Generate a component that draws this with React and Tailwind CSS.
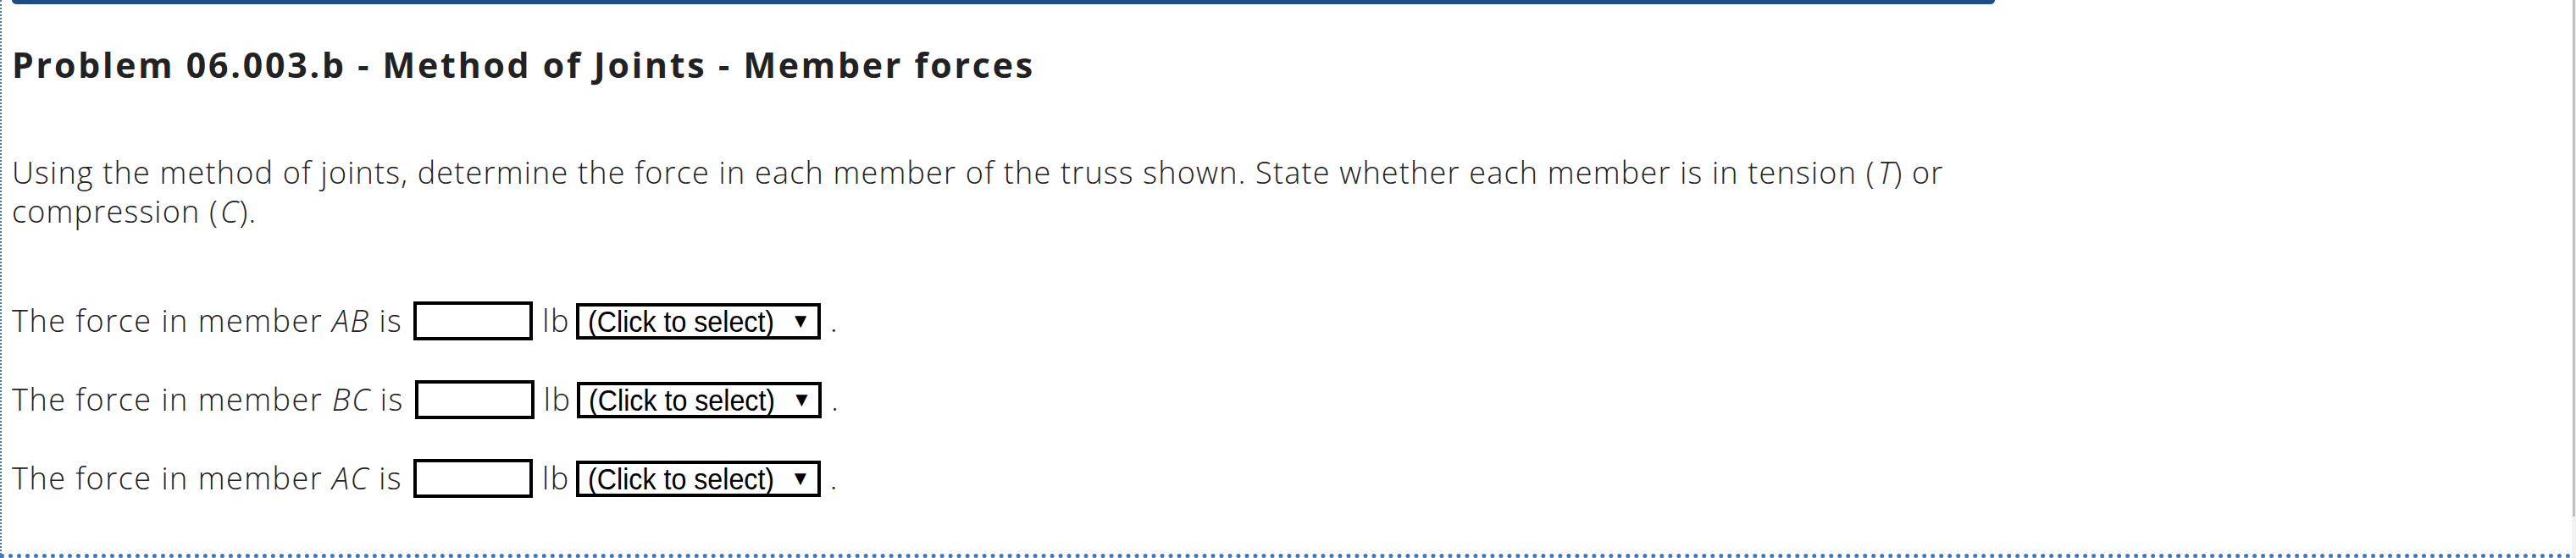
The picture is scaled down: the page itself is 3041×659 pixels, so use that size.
import React from "react";

const rows = ["AB", "BC", "AC"];

function ForceRow({ member }) {
  return (
    <div className="flex h-[46px] items-center whitespace-nowrap">
      <span>
        The force in member <i>{member}</i> is
      </span>
      <div className="ml-[13px] h-[46px] w-[141px] shrink-0 border-4 border-black bg-white" />
      <span className="ml-[11px]">lb</span>
      <div className="ml-[7px] flex h-[43px] w-[289px] shrink-0 items-center border-4 border-black bg-white pl-[10px] pr-[15px] font-['Liberation_Sans',Arial,sans-serif] tracking-normal text-black">
        <span className="inline-block shrink-0 origin-left scale-x-[0.92] text-[35px] leading-none">
          (Click to select)
        </span>
        <span className="ml-auto text-[24px] leading-none">▼</span>
      </div>
      <span className="ml-[11px]">.</span>
    </div>
  );
}

export default function App() {
  return (
    <div className="relative h-[659px] w-full overflow-hidden bg-white font-['Open_Sans','Lato',sans-serif]">
      <div className="mr-[4px] h-full border-b-[5px] border-l-2 border-dotted border-[#3a78c6] pl-[12px]">
        <div className="w-[2341px]">
          {/* bottom edge of the header box above */}
          <div className="h-[5px] rounded-b-[6px] bg-[#1d4c8a]" />

          <h1 className="mt-[47px] text-[41px] font-bold leading-[48px] tracking-[2.8px] text-[#222]">
            Problem 06.003.b - Method of Joints - Member forces
          </h1>

          <p className="mt-[81px] text-[36px] font-light leading-[46px] tracking-[1.2px] text-[#222]">
            Using the method of joints, determine the force in each member of the truss shown. State whether each member
            is in tension (<i className="pl-[3px]">T</i>) or compression (<i className="pl-[2px]">C</i>).
          </p>

          <div className="mt-[83px] flex flex-col gap-[47px] text-[36px] font-light tracking-[1.5px] text-[#222]">
            {rows.map((m) => (
              <ForceRow key={m} member={m} />
            ))}
          </div>
        </div>
      </div>

      {/* scrollbar */}
      <div className="absolute right-0 top-0 h-full w-[5px] bg-[#f1f1f1]">
        <div className="ml-[1px] h-[610px] w-[3px] bg-[#c1c1c1]" />
      </div>
    </div>
  );
}
